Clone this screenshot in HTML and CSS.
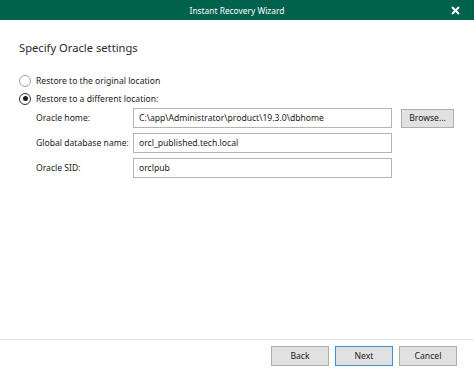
FILE: index.html
```html
<!DOCTYPE html>
<html lang="en">
<head>
    <meta charset="UTF-8">
    <title>Instant Recovery Wizard</title>
    <link rel="stylesheet" href="styles.css">
</head>
<body>
<div class="window">
    <header class="titlebar">
        <span class="title">Instant Recovery Wizard</span>
        <button class="close" aria-label="Close">
            <svg width="9" height="9" viewBox="0 0 9 9"><path d="M1 1L8 8M8 1L1 8" stroke="#fff" stroke-width="2"/></svg>
        </button>
    </header>
    <main class="content">
        <h1>Specify Oracle settings</h1>
        <div class="options">
            <label class="radio"><span class="dot"></span>Restore to the original location</label>
            <label class="radio checked"><span class="dot"></span>Restore to a different location:</label>
        </div>
        <div class="fields">
            <span class="label">Oracle home:</span>
            <div class="input">C:\app\Administrator\product\19.3.0\dbhome</div>
            <button class="btn browse">Browse...</button>
            <span class="label">Global database name:</span>
            <div class="input">orcl_published.tech.local</div>
            <span></span>
            <span class="label">Oracle SID:</span>
            <div class="input">orclpub</div>
            <span></span>
        </div>
    </main>
    <footer class="footer">
        <button class="btn">Back</button>
        <button class="btn default">Next</button>
        <button class="btn">Cancel</button>
    </footer>
</div>
</body>
</html>
```
FILE: styles.css
```css
:root {
    --title-bg: #00614c;
    --text: #1a1a1a;
    --border: #b4b4b4;
}
body {
    margin: 0;
    font-family: "Noto Sans", "Open Sans", sans-serif;
    font-size: 8.6px;
    color: var(--text);
    background: #fff;
}
.window {
    width: 474px;
    height: 372px;
    display: flex;
    flex-direction: column;
}
.titlebar {
    height: 20px;
    background: var(--title-bg);
    color: #fff;
    display: flex;
    align-items: center;
    justify-content: center;
    position: relative;
}
.title {
    font-size: 8.4px;
}
.close {
    position: absolute;
    right: 14px;
    top: 6px;
    border: 0;
    background: none;
    padding: 0;
    width: 9px;
    height: 9px;
    display: flex;
}
.content {
    flex: 1;
    padding: 20px 0 0 19px;
}
h1 {
    margin: 0 0 18px;
    font-size: 11.2px;
    font-weight: normal;
    line-height: 16px;
    color: #2a2a2a;
}
.options {
    display: flex;
    flex-direction: column;
    gap: 5px;
}
.radio {
    display: flex;
    align-items: center;
    gap: 5px;
    height: 13px;
}
.dot {
    width: 10px;
    height: 10px;
    border: 1px solid #a0a0a0;
    border-radius: 50%;
    display: flex;
    align-items: center;
    justify-content: center;
}
.radio.checked .dot {
    border-color: #333;
}
.radio.checked .dot::after {
    content: "";
    width: 5px;
    height: 5px;
    border-radius: 50%;
    background: #1a1a1a;
}
.fields {
    display: grid;
    grid-template-columns: 88px 259px 53px;
    grid-auto-rows: 20px;
    gap: 5px 9px;
    padding: 3px 0 0 17px;
    align-items: center;
}
.label {
    white-space: nowrap;
}
.input {
    height: 20px;
    box-sizing: border-box;
    border: 1px solid var(--border);
    padding: 0 5px;
    line-height: 18px;
    white-space: nowrap;
    overflow: hidden;
}
.btn {
    font-family: inherit;
    font-size: 8.6px;
    color: var(--text);
    background: #e1e1e1;
    border: 1px solid #adadad;
    height: 19px;
    padding: 0;
}
.footer {
    border-top: 1px solid #e3e3e3;
    height: 33px;
    display: flex;
    justify-content: flex-end;
    align-items: flex-start;
    gap: 6px;
    padding: 6px 17px 0 0;
    box-sizing: border-box;
}
.footer .btn {
    width: 58px;
    height: 20px;
}
.footer .default {
    border-color: #3c8fd6;
}
```
